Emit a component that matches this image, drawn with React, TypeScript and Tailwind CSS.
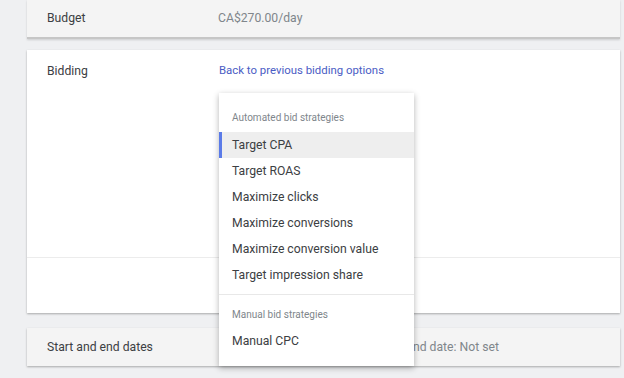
import React from "react";

const items = [
  "Target CPA",
  "Target ROAS",
  "Maximize clicks",
  "Maximize conversions",
  "Maximize conversion value",
  "Target impression share",
];

export default function App() {
  return (
    <div
      className="relative w-[624px] h-[378px] overflow-hidden bg-[#eff0f2]"
      style={{ fontFamily: "Roboto, 'Liberation Sans', sans-serif" }}
    >
      <div className="flex flex-col pl-[27px] pr-[4px]">
        {/* Budget card */}
        <div className="h-[39px] bg-[#f4f4f4] border-b-2 border-[#c6c6c6] shadow-[0_1px_2px_rgba(0,0,0,0.15)] flex items-center">
          <div className="w-[191px] pl-[20px] text-[12.2px] text-[#3c4043]">Budget</div>
          <div className="text-[12.2px] text-[#80868b]">CA$270.00/day</div>
        </div>

        {/* Bidding card */}
        <div className="mt-[11px] h-[263px] bg-white shadow-[0_1px_2px_rgba(0,0,0,0.3)] flex flex-col">
          <div className="h-[208px] border-b border-[#ececec] pt-[13px]">
            <div className="flex items-center h-[16px]">
              <div className="w-[192px] pl-[20px] text-[12.2px] text-[#3c4043]">Bidding</div>
              <div className="text-[11.4px] text-[#4a5cc4]">Back to previous bidding options</div>
            </div>
          </div>
        </div>

        {/* Start and end dates card */}
        <div className="mt-[15px] h-[38px] bg-[#f4f4f4] shadow-[0_1px_2px_rgba(0,0,0,0.3)] flex items-center">
          <div className="w-[191px] pl-[20px] text-[12.2px] text-[#3c4043]">Start and end dates</div>
          <div className="ml-[188px] text-[12.2px] text-[#80868b] whitespace-nowrap">End date: Not set</div>
        </div>
      </div>

      {/* Dropdown menu */}
      <div className="absolute left-[219px] top-[93px] w-[195px] h-[273px] bg-white shadow-[0_2px_6px_rgba(0,0,0,0.3)] flex flex-col">
        <div className="h-[39px] flex items-end pb-[7px] pl-[13px] text-[10px] text-[#80868b]">
          Automated bid strategies
        </div>
        {items.map((t, i) => (
          <div
            key={t}
            className={
              i === 0
                ? "h-[26px] flex items-center pl-[10px] border-l-[3px] border-[#5b7be8] bg-[#eeeeee] text-[12.2px] text-[#3c4043]"
                : "h-[26px] flex items-center pl-[13px] text-[12.2px] text-[#3c4043]"
            }
          >
            {t}
          </div>
        ))}
        <div className="mt-[6px] border-t border-[#e8e8e8]" />
        <div className="pt-[14px] pl-[13px] text-[10px] leading-[12px] text-[#80868b]">
          Manual bid strategies
        </div>
        <div className="h-[40px] flex items-center pl-[13px] text-[12.2px] text-[#3c4043]">Manual CPC</div>
      </div>
    </div>
  );
}
